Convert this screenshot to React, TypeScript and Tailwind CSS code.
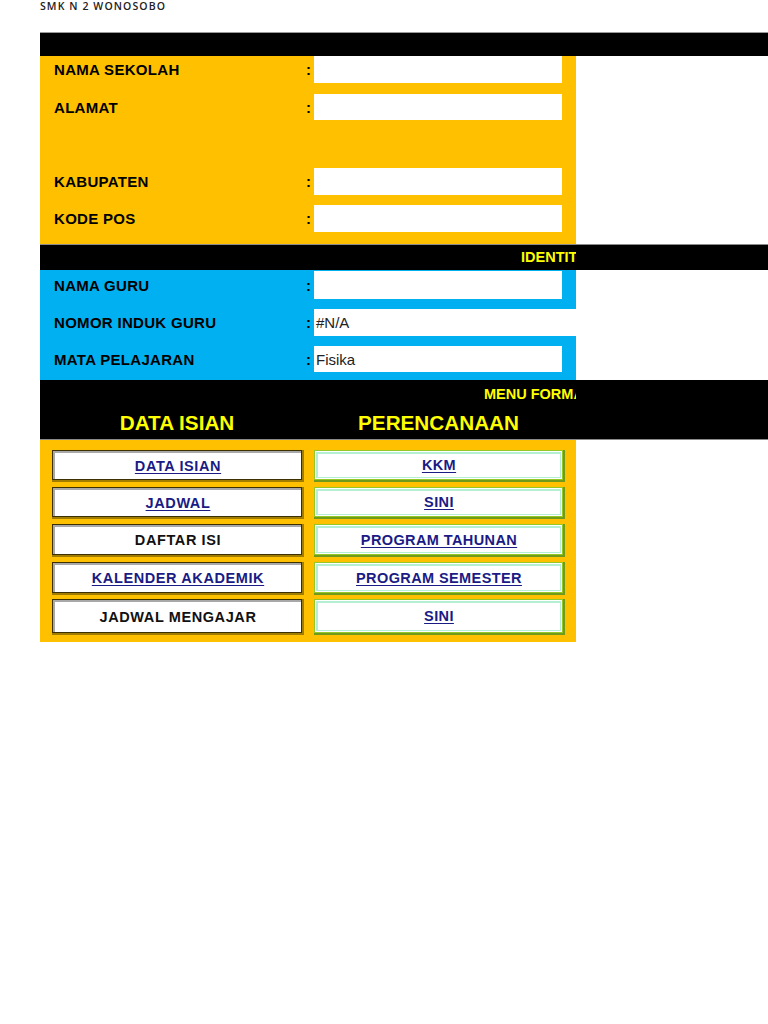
import React from "react";

function Row({ label, value, h, mt, wide }: { label: string; value?: string; h: string; mt: string; wide?: boolean }) {
  return (
    <div className={`flex items-center ${h} ${mt}`}>
      <div className="w-[252px] text-[15px] font-bold tracking-[0.3px] leading-none">{label}</div>
      <div className="w-[8px] text-[15px] font-bold leading-none">:</div>
      <div className={`${wide ? "w-[262px]" : "w-[248px]"} h-full bg-white flex items-center pl-[2px] text-[15px] text-[#222] leading-none`}>
        {value}
      </div>
    </div>
  );
}

function LeftBtn({ text, link }: { text: string; link?: boolean }) {
  return (
    <div className="w-[250px] h-full bg-white border border-[#3d3000] shadow-[1px_1px_0_1px_#a07c00]">
      <div className="h-full border-t-[2px] border-l-[2px] border-[#a8a8a8] flex items-center justify-center">
        <span className={`text-[14.5px] font-bold tracking-[0.6px] leading-none ${link ? "text-[#1b1b85] underline underline-offset-2" : "text-[#111]"}`}>{text}</span>
      </div>
    </div>
  );
}

function RightBtn({ text }: { text: string }) {
  return (
    <div className="w-[249px] h-full bg-white border border-[#94c825] shadow-[1px_1px_0_1px_#6f9a1c] p-[1px]">
      <div className="h-full border-t-[2px] border-l-[2px] border-r border-b border-[#b5efd3] flex items-center justify-center">
        <span className="text-[14.5px] font-bold tracking-[0.4px] leading-none text-[#1b1b85] underline underline-offset-2">{text}</span>
      </div>
    </div>
  );
}

export default function App() {
  const rows: { l: string; r: string; ll?: boolean; h: string; mt: string }[] = [
    { l: "DATA ISIAN", ll: true, r: "KKM", h: "h-[30px]", mt: "mt-0" },
    { l: "JADWAL", ll: true, r: "SINI", h: "h-[30px]", mt: "mt-[7px]" },
    { l: "DAFTAR ISI", r: "PROGRAM TAHUNAN", h: "h-[31px]", mt: "mt-[7px]" },
    { l: "KALENDER AKADEMIK", ll: true, r: "PROGRAM SEMESTER", h: "h-[31px]", mt: "mt-[7px]" },
    { l: "JADWAL MENGAJAR", r: "SINI", h: "h-[34px]", mt: "mt-[6px]" },
  ];
  return (
    <div className="w-[768px] min-h-[1024px] bg-white font-['Liberation_Sans',Arial,sans-serif] text-black">
      <div className="h-[32px] pl-[40px] font-['Open_Sans',sans-serif] text-[10.5px] font-semibold tracking-[1.1px] leading-[13px] text-[#222]">
        SMK N 2 WONOSOBO
      </div>
      <div className="ml-[40px]">
        <div className="h-[24px] bg-black border-t border-[#9a9a9a]" />
        <div className="w-[536px] h-[188px] bg-[#ffc000] pl-[14px]">
          <Row label="NAMA SEKOLAH" h="h-[27px]" mt="mt-0" />
          <Row label="ALAMAT" h="h-[26px]" mt="mt-[11px]" />
          <Row label="KABUPATEN" h="h-[27px]" mt="mt-[48px]" />
          <Row label="KODE POS" h="h-[27px]" mt="mt-[10px]" />
        </div>
        <div className="h-[26px] bg-black border-t border-[#8a8a8a]">
          <div className="w-[536px] h-full overflow-hidden flex items-center pl-[481px]">
            <span className="whitespace-nowrap text-[14.5px] font-bold text-[#ffff00] leading-none">IDENTITAS GURU</span>
          </div>
        </div>
        <div className="w-[536px] h-[110px] bg-[#00b0f0] pl-[14px] pt-[1px]">
          <Row label="NAMA GURU" h="h-[28px]" mt="mt-0" />
          <Row label="NOMOR INDUK GURU" value="#N/A" h="h-[27px]" mt="mt-[10px]" wide />
          <Row label="MATA PELAJARAN" value="Fisika" h="h-[26px]" mt="mt-[10px]" />
        </div>
        <div className="h-[60px] bg-black border-b border-[#8a8a8a]">
          <div className="w-[536px] h-[28px] overflow-hidden flex items-center pl-[444px]">
            <span className="whitespace-nowrap text-[14.5px] font-bold text-[#ffff00] leading-none">MENU FORMAT PERANGKAT</span>
          </div>
          <div className="w-[536px] h-[31px] flex items-center pl-[12px] gap-[12px]">
            <div className="w-[250px] text-center text-[20.7px] font-bold text-[#ffff00] leading-none">DATA ISIAN</div>
            <div className="w-[249px] text-center text-[20.7px] font-bold text-[#ffff00] leading-none">PERENCANAAN</div>
          </div>
        </div>
        <div className="w-[536px] h-[202px] bg-[#ffc000] pl-[12px] pt-[10px]">
          {rows.map((r, i) => (
            <div key={i} className={`flex gap-[12px] ${r.h} ${r.mt}`}>
              <LeftBtn text={r.l} link={r.ll} />
              <RightBtn text={r.r} />
            </div>
          ))}
        </div>
      </div>
    </div>
  );
}
